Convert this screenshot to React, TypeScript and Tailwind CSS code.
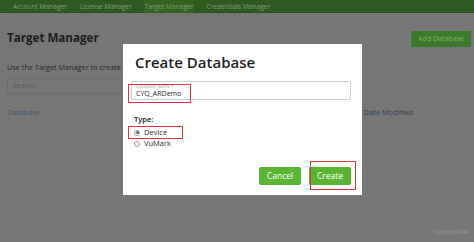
import React from 'react';

const navItems = ['Account Manager', 'License Manager', 'Target Manager', 'Credentials Manager'];

const Radio: React.FC<{ label: string; checked?: boolean }> = ({ label, checked }) => (
  <div className="flex items-center gap-[4px] h-[11px]">
    <span className="w-[6px] h-[6px] rounded-full border border-[#9a9a9a] flex items-center justify-center">
      {checked && <span className="w-[3px] h-[3px] rounded-full bg-[#6a6a6a]" />}
    </span>
    <span className="text-[7.5px] text-[#2a2a2a]">{label}</span>
  </div>
);

const App: React.FC = () => {
  return (
    <div className="relative w-[474px] h-[242px] overflow-hidden bg-[#767676]" style={{ fontFamily: '"Open Sans", "Noto Sans", sans-serif' }}>
      {/* nav bar */}
      <div className="h-[13px] bg-[#2d5a1e] border-b border-[#284f1b] flex items-center pl-[12px] gap-[11px]">
        {navItems.map((n) => (
          <span key={n} className={`text-[6.6px] leading-[13px] text-[#819f76] px-[1px] ${n === 'Target Manager' ? 'bg-[#32641f]' : ''}`}>{n}</span>
        ))}
      </div>

      {/* dimmed page */}
      <div className="px-[7px] pt-[14px]">
        <div className="flex items-start justify-between">
          <h1 className="text-[11.6px] leading-[22px] font-bold text-[#1c1c1c]">Target Manager</h1>
          <div className="mt-[4px] w-[60px] h-[16px] bg-[#3b7a2a] flex items-center justify-center text-[7px] text-[#86ad79] mr-[-4px]">Add Database</div>
        </div>
        <p className="mt-[12px] whitespace-nowrap text-[7.3px] leading-[12px] text-[#262626]">Use the Target Manager to create</p>
        <div className="mt-[5px] h-[16px] w-[300px] border border-[#6c6c6c] flex items-center pl-[5px] text-[7px] text-[#585858]">Search</div>
        <div className="mt-[13px] flex justify-between pr-[54px]">
          <span className="text-[7.5px] text-[#3e5570]">Database</span>
          <span className="text-[7.5px] text-[#2e3e50]">Date Modified</span>
        </div>
      </div>

      {/* modal */}
      <div className="absolute left-[123px] top-[44px] w-[239px] h-[151px] bg-white pt-[8px] pl-[8px] pr-[11px] flex flex-col">
        <h2 className="ml-[4px] text-[15px] leading-[21px] font-semibold text-[#1f1f1f]">Create Database</h2>
        <div className="relative mt-[8px] w-[220px] h-[19px] border border-[#c4d0dc] rounded-[2px] pl-[4px]">
          <div className="text-[4.5px] leading-[6px] mt-[1px] text-[#b0b0b0]">Database Name *</div>
          <div className="text-[7px] leading-[9px] text-[#1f1f1f]">CYQ_ARDemo</div>
          <div className="absolute left-[-4px] top-[2px] w-[63px] h-[19px] border border-[#e0343c]" />
        </div>
        <div className="mt-[14px] ml-[3px] text-[7.5px] leading-[10px] font-semibold text-[#222]">Type:</div>
        <div className="mt-[3px] ml-[3px] flex flex-col">
          <div className="relative">
            <Radio label="Device" checked />
            <div className="absolute left-[-6px] top-[-1px] w-[55px] h-[13px] border border-[#e0343c]" />
          </div>
          <Radio label="VuMark" />
        </div>
        <div className="mt-auto mb-[10px] flex justify-end gap-[8px]">
          <div className="w-[42px] h-[18px] rounded-[2px] bg-[#5bb434] flex items-center justify-center text-[8.5px] text-white">Cancel</div>
          <div className="relative w-[42px] h-[18px] rounded-[2px] bg-[#5bb434] flex items-center justify-center text-[8.5px] text-white">
            Create
            <div className="absolute left-[1px] top-[-6px] w-[46px] h-[29px] border border-[#e0343c]" />
          </div>
        </div>
      </div>

      <div className="absolute right-[5px] bottom-[6px] text-[5px] text-[#9c9c9c]">CSDN @SDFWF</div>
    </div>
  );
};

export default App;
